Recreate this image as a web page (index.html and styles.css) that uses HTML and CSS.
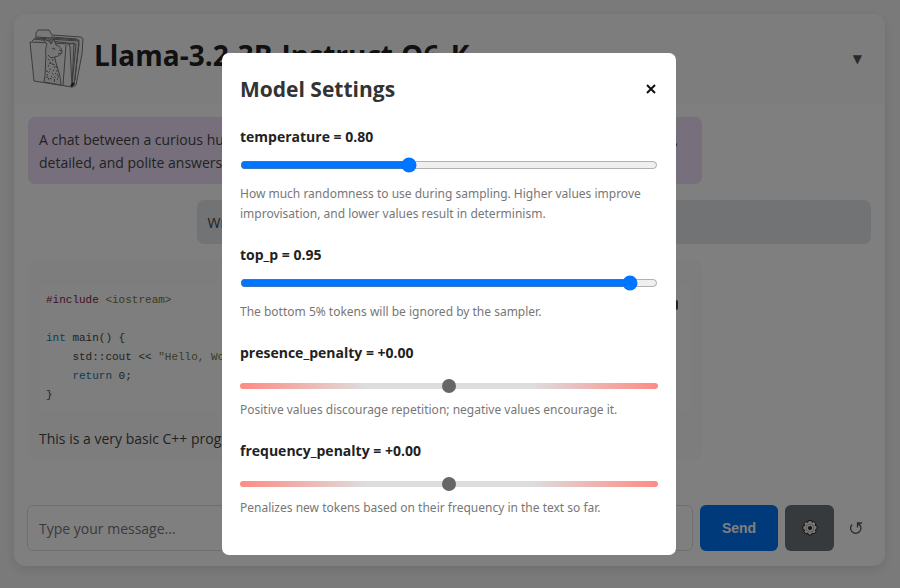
FILE: index.html
```html
<!DOCTYPE html>
<html lang="en">
<head>
<meta charset="utf-8">
<meta name="viewport" content="width=device-width, initial-scale=1">
<title>Llama-3.2-3B-Instruct.Q6_K</title>
<link rel="stylesheet" href="styles.css">
</head>
<body>
<main class="chat">
  <header class="chat-header">
    <svg class="logo" viewBox="0 0 60 62" fill="none" stroke="#777" stroke-width="1" stroke-linejoin="round" aria-hidden="true">
      <path fill="#f1f3f1" d="M8 12V5l2-3h11l3 5 29 2 2 2-1 15-6 31-3 2-10-2L8 20z"/>
      <path fill="#e4e7e4" d="M4 13l3-3 43 3 1 3-5 41-3 2"/>
      <path d="M6 11l42 5-4 41M9 9l42 3-4 40M23 9l26 2"/>
      <path fill="#f1f3f1" d="M2 14l39 2 1 3 2 40-38-6z"/>
      <path d="M41 16l5-1-2 43M38 17l-3 40"/>
      <path stroke="#222" stroke-width="2" d="M43 58l3-3"/>
      <path fill="#e9ebe9" d="M16 54c2-10 1-18 2-26-1-6 0-9 1-12l-4-5 6 2 2 3 3-5 2 6c4 1 6 4 6 7 0 3-4 4-7 5 0 7 5 13 6 28z"/>
      <path d="M24 21l2-1 1 2M31 22l3 1M30 26l3-1M20 27l3 3 4-1"/>
      <path stroke-dasharray="2 2" d="M20 31l3 3-3 4 3 4-4 4 2 6M25 31l-1 5 3 4-3 5 3 4-1 6M28 38l1 5 1 5-1 6M18 43l4 1M18 49l6 2M27 45l4 4M21 35l6 2M23 48l4 4"/>
    </svg>
    <h1 class="chat-title">Llama-3.2-3B-Instruct.Q6_K</h1>
    <button class="menu-trigger" type="button" aria-label="Menu">▼</button>
  </header>

  <section class="messages">
    <div class="message system">A chat between a curious human and an artificial intelligence assistant. The assistant gives helpful, detailed, and polite answers to the human's questions.</div>
    <div class="message user">Write hello world in C++</div>
    <div class="message assistant">
      <div class="code-block">
        <pre><code><span class="pre">#include</span> <span class="str">&lt;iostream&gt;</span>

<span class="kw">int</span> main() {
    std::cout &lt;&lt; <span class="str">"Hello, World!"</span>;
    <span class="kw">return</span> 0;
}</code></pre>
        <button class="copy" type="button" aria-label="Copy code">
          <svg viewBox="0 0 14 14" fill="none" stroke="#444" stroke-width="2" aria-hidden="true"><rect x="2" y="3" width="8" height="8" rx="1"/></svg>
        </button>
      </div>
      <p>This is a very basic C++ program.</p>
    </div>
  </section>

  <form class="composer">
    <textarea class="prompt" rows="1" placeholder="Type your message..." aria-label="Message"></textarea>
    <button class="send" type="button">Send</button>
    <button class="gear" type="button" aria-label="Settings">
      <svg viewBox="0 0 18 18" aria-hidden="true">
        <path fill="#eee" stroke="#222" stroke-width="1" d="M7.500 1.500h3l.6 1.800 1.700-.8 2.100 2-.8 1.800 2 .9v2.900l-1.800.8.8 1.900-2 2-1.900-.8-.8 2H7.500l-.7-1.900-1.900.8-2-2.100.8-1.800-1.900-.8V7.300l1.900-.8-.8-1.900 2-2 1.900.8z"/>
        <circle cx="9" cy="9" r="4" fill="none" stroke="#bbb"/>
        <circle cx="9" cy="9" r="2" fill="#222"/>
      </svg>
    </button>
    <button class="reload" type="button" aria-label="Start over">
      <svg viewBox="0 0 16 16" fill="none" stroke="#555" stroke-width="1.300" aria-hidden="true">
        <path d="M4 4.500A5.200 5.200 0 1 0 11.500 4.500M14 3h-4.500v4.500M10 3.500l2 2"/>
      </svg>
    </button>
  </form>
</main>

<div class="overlay">
  <div class="modal" role="dialog" aria-modal="true" aria-labelledby="settings-title">
    <div class="modal-header">
      <h2 id="settings-title">Model Settings</h2>
      <button class="close" type="button" aria-label="Close">
        <svg viewBox="0 0 10 10" stroke="#111" stroke-width="2" aria-hidden="true"><path d="M1 1l8 8M9 1L1 9"/></svg>
      </button>
    </div>
    <div class="setting">
      <label for="temperature">temperature = 0.80</label>
      <input id="temperature" class="slider" type="range" min="0" max="2" step="0.01" value="0.8">
      <p>How much randomness to use during sampling. Higher values improve improvisation, and lower values result in determinism.</p>
    </div>
    <div class="setting">
      <label for="top-p">top_p = 0.95</label>
      <input id="top-p" class="slider" type="range" min="0" max="1" step="0.01" value="0.95">
      <p>The bottom 5% tokens will be ignored by the sampler.</p>
    </div>
    <div class="setting">
      <label for="presence">presence_penalty = +0.00</label>
      <input id="presence" class="slider penalty" type="range" min="-2" max="2" step="0.01" value="0">
      <p>Positive values discourage repetition; negative values encourage it.</p>
    </div>
    <div class="setting">
      <label for="frequency">frequency_penalty = +0.00</label>
      <input id="frequency" class="slider penalty" type="range" min="-2" max="2" step="0.01" value="0">
      <p>Penalizes new tokens based on their frequency in the text so far.</p>
    </div>
  </div>
</div>
</body>
</html>
```

FILE: styles.css
```css
* {
  box-sizing: border-box;
}

body {
  margin: 0;
  padding: 14px 15px 22px 14px;
  background: #f5f5f5;
  color: #444;
  font: 14px/23px "Open Sans", "Noto Sans", sans-serif;
}

h1, h2, p, pre {
  margin: 0;
}

button {
  padding: 0;
  border: 0;
  background: none;
}

.chat {
  display: flex;
  flex-direction: column;
  min-height: calc(100vh - 36px);
  overflow: hidden;
  border-radius: 12px;
  background: #fff;
  box-shadow: 0 4px 12px rgba(0, 0, 0, 0.1);
}

.chat-header {
  display: flex;
  align-items: center;
  gap: 6px;
  height: 90px;
  padding: 0 23px 0 14px;
  background: #fafafa;
}

.logo {
  width: 60px;
  height: 62px;
}

.chat-title {
  flex: 1;
  color: #222;
  font-size: 28px;
  line-height: 36px;
  padding-bottom: 8px;
}

.menu-trigger {
  color: #555;
  font: 12px "DejaVu Sans", sans-serif;
}

.messages {
  flex: 1;
  display: flex;
  flex-direction: column;
  gap: 16px;
  padding: 13px 14px;
}

.message {
  width: 80%;
  padding: 11px 11px 10px;
  border-radius: 7px;
}

.system {
  background: #eedff6;
}

.user {
  align-self: flex-end;
  background: #e3e7ea;
}

.assistant {
  background: #fafafa;
}

.code-block {
  display: flex;
  justify-content: space-between;
  margin: 13px 0 15px;
  padding: 7px;
  border-radius: 4px;
  background: #fdfdfd;
}

.code-block pre,
.code-block code {
  font: 11px/19px "Liberation Mono", monospace;
}

.pre {
  color: #824;
}

.kw {
  color: #27a;
}

.str {
  color: #774;
}

.copy {
  align-self: flex-start;
  padding: 7px 3px;
}

.copy svg {
  display: block;
  width: 14px;
  height: 14px;
}

.composer {
  display: flex;
  gap: 7px;
  padding: 14px 14px 15px 13px;
}

.prompt {
  flex: 1;
  min-width: 0;
  height: 46px;
  padding: 11px;
  border: 1px solid #ddd;
  border-radius: 6px;
  background: #fff;
  font: inherit;
  resize: none;
}

.prompt::placeholder {
  color: #757575;
}

.send {
  width: 78px;
  border-radius: 6px;
  background: #0075f5;
  color: #fff;
  font: bold 14px "Liberation Sans", sans-serif;
}

.gear {
  display: grid;
  place-items: center;
  width: 49px;
  border-radius: 6px;
  background: #6c757a;
}

.gear svg {
  width: 18px;
  height: 18px;
}

.reload {
  display: grid;
  place-items: center;
  width: 30px;
}

.reload svg {
  width: 16px;
  height: 16px;
}

.overlay {
  position: fixed;
  inset: 0;
  display: flex;
  align-items: flex-start;
  justify-content: center;
  padding: 53px 16px 16px 14px;
  overflow: auto;
  background: rgba(0, 0, 0, 0.5);
}

.modal {
  width: 100%;
  max-width: 454px;
  padding: 18px;
  border-radius: 7px;
  background: #fff;
  color: #333;
}

.modal-header {
  display: flex;
  align-items: center;
  justify-content: space-between;
  margin-bottom: 18px;
}

.modal-header h2 {
  font-size: 21px;
  line-height: 36px;
}

.close {
  padding: 0 2px;
}

.close svg {
  display: block;
  width: 10px;
  height: 10px;
}

.setting {
  margin-bottom: 19px;
}

.setting label {
  display: block;
  color: #222;
  font-size: 14px;
  font-weight: bold;
}

.setting p {
  color: #777;
  font-family: "Noto Sans", sans-serif;
  font-size: 12px;
  line-height: 20px;
}

.slider {
  display: block;
  width: 100%;
  height: 16px;
  margin: 9px 0 11px;
}

.penalty {
  height: 14px;
  margin: 15px 0 7px;
  appearance: none;
  background: none;
}

.penalty::-webkit-slider-runnable-track {
  height: 6px;
  border-radius: 3px;
  background: linear-gradient(to right, #ff8a84, #ddd 30%, #ddd 70%, #ff8a84);
}

.penalty::-webkit-slider-thumb {
  width: 14px;
  height: 14px;
  margin-top: -4px;
  appearance: none;
  border-radius: 50%;
  background: #666;
}
```
